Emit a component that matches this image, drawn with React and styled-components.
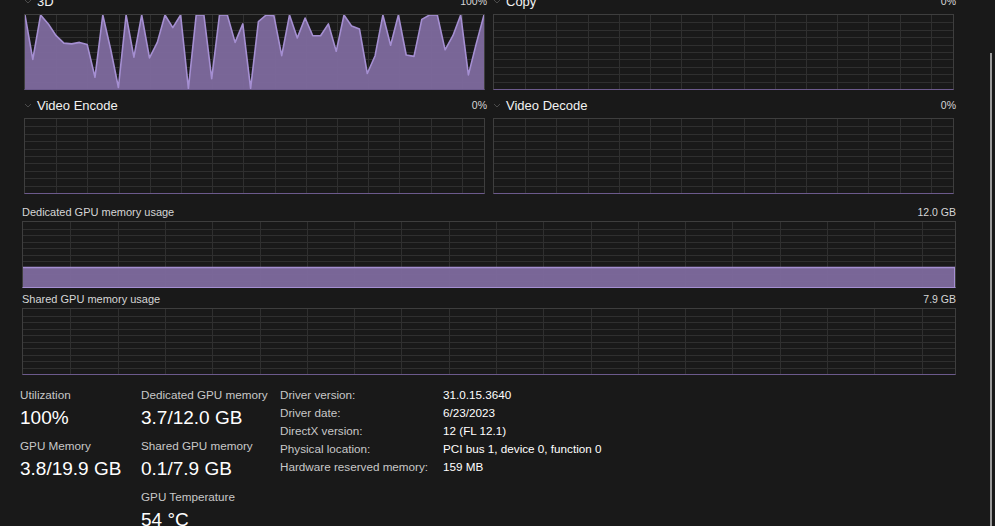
import React from "react";
import styled, { createGlobalStyle } from "styled-components";

const BG = "#191919";
const GRID = "#2f2f2f";
const FRAME = "#3e3e3e";
const PURPLE_LINE = "#a58fd2";
const PURPLE_FILL = "#7e6a9e";
const PURPLE_BASE = "#6c5a8c";

// 3D engine load, one sample per tick (percent)
const load3d = [
  100, 40, 100, 88, 72, 62, 61, 63, 60, 16, 100, 54, 2, 100, 43, 100, 42, 63,
  100, 83, 100, 1, 100, 100, 14, 100, 100, 63, 88, 1, 91, 100, 99, 45, 100, 69,
  96, 72, 72, 88, 51, 100, 85, 81, 21, 45, 100, 59, 100, 46, 44, 94, 100, 100,
  53, 72, 100, 19, 61, 100,
];

const engines = [
  { name: "3D", value: "100%", data: load3d },
  { name: "Copy", value: "0%" },
  { name: "Video Encode", value: "0%" },
  { name: "Video Decode", value: "0%" },
];

const memory = [
  { name: "Dedicated GPU memory usage", max: "12.0 GB", used: 3.7 / 12 },
  { name: "Shared GPU memory usage", max: "7.9 GB", used: 0 },
];

const bigStats = [
  [
    { label: "Utilization", value: "100%" },
    { label: "GPU Memory", value: "3.8/19.9 GB" },
  ],
  [
    { label: "Dedicated GPU memory", value: "3.7/12.0 GB" },
    { label: "Shared GPU memory", value: "0.1/7.9 GB" },
    { label: "GPU Temperature", value: "54 °C" },
  ],
];

const details = [
  ["Driver version:", "31.0.15.3640"],
  ["Driver date:", "6/23/2023"],
  ["DirectX version:", "12 (FL 12.1)"],
  ["Physical location:", "PCI bus 1, device 0, function 0"],
  ["Hardware reserved memory:", "159 MB"],
];

const GlobalStyle = createGlobalStyle`
  html, body {
    margin: 0;
    background: ${BG};
    overflow: hidden;
  }
  body {
    font-family: "Liberation Sans", Arial, sans-serif;
    color: #ffffff;
  }
`;

const GridLines = ({ w, h, colStep, rows }) => {
  const cols = [];
  for (let x = colStep; x < w; x += colStep) cols.push(Math.round(x) + 0.5);
  const rowLines = [];
  for (let i = 1; i < rows; i++) rowLines.push(Math.round((h / rows) * i) + 0.5);
  return (
    <g stroke={GRID} strokeWidth="1">
      {cols.map((x) => (
        <line key={"c" + x} x1={x} y1="0" x2={x} y2={h} />
      ))}
      {rowLines.map((y) => (
        <line key={"r" + y} x1="0" y1={y} x2={w} y2={y} />
      ))}
    </g>
  );
};

const EngineChart = ({ data }) => {
  const w = 459;
  const h = 74;
  let area = null;
  if (data) {
    const step = w / (data.length - 1);
    const pts = data.map((v, i) => `${(i * step).toFixed(1)},${(h * (1 - v / 100)).toFixed(1)}`);
    area = (
      <>
        <polygon points={`0,${h} ${pts.join(" ")} ${w},${h}`} fill={PURPLE_FILL} opacity="0.95" />
        <polyline points={pts.join(" ")} fill="none" stroke={PURPLE_LINE} strokeWidth="1.6" strokeLinejoin="round" />
      </>
    );
  }
  return (
    <svg width={w} height={h} viewBox={`0 0 ${w} ${h}`}>
      <GridLines w={w} h={h} colStep={31.2} rows={10} />
      {area}
    </svg>
  );
};

const MemoryChart = ({ used }) => {
  const w = 932;
  const h = 65;
  const bar = h * used;
  return (
    <svg width={w} height={h} viewBox={`0 0 ${w} ${h}`}>
      <GridLines w={w} h={h} colStep={47.3} rows={10} />
      {bar > 0 && (
        <>
          <rect x="0" y={h - bar} width={w} height={bar} fill={PURPLE_FILL} opacity="0.95" />
          <line x1="0" y1={h - bar + 0.5} x2={w} y2={h - bar + 0.5} stroke={PURPLE_LINE} strokeWidth="1.5" />
          <line x1={w - 0.5} y1={h - bar} x2={w - 0.5} y2={h} stroke={PURPLE_LINE} strokeWidth="1" />
        </>
      )}
    </svg>
  );
};

const Chevron = () => (
  <svg width="8" height="5" viewBox="0 0 8 5">
    <path d="M1 1l3 3 3-3" fill="none" stroke="#4a4a4a" strokeWidth="1" />
  </svg>
);

const App = () => {
  return (
    <>
      <GlobalStyle />
      <Page>
        <Content>
          <EngineGrid>
            {engines.map((e) => (
              <Engine key={e.name}>
                <EngineHead>
                  <EngineName>
                    <Chevron />
                    {e.name}
                  </EngineName>
                  <Reading>{e.value}</Reading>
                </EngineHead>
                <ChartBox>
                  <EngineChart data={e.data} />
                </ChartBox>
              </Engine>
            ))}
          </EngineGrid>

          <MemoryList>
            {memory.map((m) => (
              <Memory key={m.name}>
                <MemoryHead>
                  <MemoryName>{m.name}</MemoryName>
                  <Reading>{m.max}</Reading>
                </MemoryHead>
                <ChartBox $flat={m.used > 0}>
                  <MemoryChart used={m.used} />
                </ChartBox>
              </Memory>
            ))}
          </MemoryList>

          <Stats>
            {bigStats.map((col, i) => (
              <StatColumn key={i} $width={i === 0 ? 121 : 139}>
                {col.map((s) => (
                  <Stat key={s.label}>
                    <StatLabel>{s.label}</StatLabel>
                    <StatValue>{s.value}</StatValue>
                  </Stat>
                ))}
              </StatColumn>
            ))}
            <Details>
              {details.map(([k, v]) => (
                <React.Fragment key={k}>
                  <DetailKey>{k}</DetailKey>
                  <DetailValue>{v}</DetailValue>
                </React.Fragment>
              ))}
            </Details>
          </Stats>
        </Content>
        <ScrollThumb />
      </Page>
    </>
  );
};

const Page = styled.div`
  position: relative;
  width: 995px;
  height: 526px;
  overflow: hidden;
  background: ${BG};
`;

const Content = styled.div`
  margin-top: -8px;
  padding-left: 20px;
`;

const EngineGrid = styled.div`
  display: grid;
  grid-template-columns: 463px 463px;
  column-gap: 6px;
  row-gap: 6px;
  margin-left: 4px;
`;

const Engine = styled.div`
  display: flex;
  flex-direction: column;
  gap: 2px;
`;

const EngineHead = styled.div`
  height: 20px;
  display: flex;
  align-items: center;
  justify-content: space-between;
  margin-top: -1px;
  margin-bottom: 1px;
`;

const EngineName = styled.div`
  display: flex;
  align-items: center;
  gap: 5px;
  font-size: 13px;
  color: #f2f2f2;
  svg {
    margin-top: 1px;
  }
`;

const Reading = styled.span`
  font-size: 10.5px;
  color: #d6d6d6;
`;

const ChartBox = styled.div`
  display: flex;
  align-self: flex-start;
  border: 1px solid ${FRAME};
  border-bottom-color: ${(p) => (p.$flat ? PURPLE_LINE : PURPLE_BASE)};
`;

const MemoryList = styled.div`
  display: flex;
  flex-direction: column;
  gap: 4px;
  margin: 11px 0 0 2px;
  width: 934px;
`;

const Memory = styled.div`
  display: flex;
  flex-direction: column;
  gap: 2px;
`;

const MemoryHead = styled.div`
  height: 14px;
  display: flex;
  align-items: center;
  justify-content: space-between;
`;

const MemoryName = styled.span`
  font-size: 11px;
  color: #d6d6d6;
`;

const Stats = styled.div`
  display: flex;
  margin-top: 12px;
`;

const StatColumn = styled.div`
  width: ${(p) => p.$width}px;
  display: flex;
  flex-direction: column;
`;

const Stat = styled.div`
  display: flex;
  flex-direction: column;
  gap: 3px;
  margin-bottom: 8px;
`;

const StatLabel = styled.div`
  font-size: 11.7px;
  line-height: 16px;
  color: #c8c8c8;
`;

const StatValue = styled.div`
  font-size: 19px;
  line-height: 24px;
  color: #ffffff;
`;

const Details = styled.div`
  display: grid;
  grid-template-columns: 163px auto;
  grid-auto-rows: 18px;
  margin-top: -1px;
  align-self: flex-start;
  font-size: 11.7px;
  line-height: 18px;
`;

const DetailKey = styled.div`
  color: #c8c8c8;
`;

const DetailValue = styled.div`
  color: #ffffff;
`;

const ScrollThumb = styled.div`
  position: absolute;
  top: 53px;
  bottom: 0;
  left: 990px;
  width: 2px;
  background: #9a9a9a;
`;

export default App;
